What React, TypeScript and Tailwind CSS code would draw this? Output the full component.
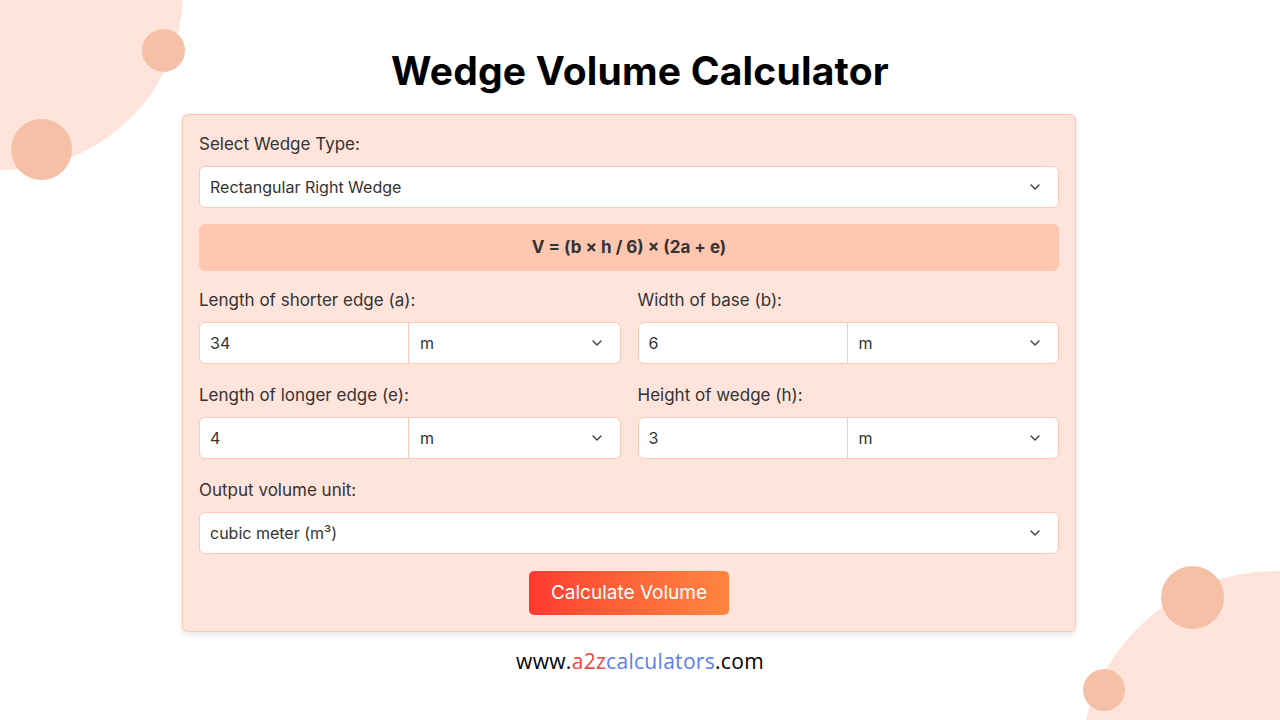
import { ChevronDown } from "lucide-react";

const field = "h-[42px] bg-white border border-[#fcc9b6] text-[16px] text-[#333] flex items-center";

function UnitInput({ label, value }: { label: string; value: string }) {
  return (
    <div className="flex-1">
      <p className="text-[17px] text-[#333] leading-6 mb-[10px]">{label}</p>
      <div className="flex">
        <div className={`${field} w-[210px] rounded-l-[6px] px-[10px]`}>{value}</div>
        <div className={`${field} flex-1 rounded-r-[6px] border-l-0 pl-[11px] pr-[15px] justify-between`}>
          <span>m</span>
          <ChevronDown className="w-4 h-4 text-[#444]" strokeWidth={2.2} />
        </div>
      </div>
    </div>
  );
}

function SelectBox({ value }: { value: string }) {
  return (
    <div className={`${field} rounded-[6px] pl-[10px] pr-[15px] justify-between`}>
      <span>{value}</span>
      <ChevronDown className="w-4 h-4 text-[#444]" strokeWidth={2.2} />
    </div>
  );
}

export default function App() {
  return (
    <div className="relative w-[1280px] h-[720px] overflow-hidden bg-white" style={{ fontFamily: "Inter, 'Noto Sans', sans-serif" }}>
      {/* background decorations */}
      <div className="absolute left-[-173px] top-[-186px] w-[356px] h-[356px] rounded-full bg-[#fee4da]" />
      <div className="absolute left-[142px] top-[29px] w-[43px] h-[43px] rounded-full bg-[#f5c0a5]" />
      <div className="absolute left-[11px] top-[119px] w-[61px] h-[61px] rounded-full bg-[#f5c0a5]" />
      <div className="absolute left-[1080px] top-[571px] w-[392px] h-[392px] rounded-full bg-[#fee4da]" />
      <div className="absolute left-[1161px] top-[566px] w-[63px] h-[63px] rounded-full bg-[#f5c0a5]" />
      <div className="absolute left-[1083px] top-[669px] w-[42px] h-[42px] rounded-full bg-[#f5c0a5]" />

      <div className="relative flex flex-col items-center">
        <h1 className="mt-[45px] text-[39px] leading-[52px] font-bold text-black tracking-[0.2px]">Wedge Volume Calculator</h1>

        <div className="self-start ml-[182px] mt-[17px] w-[894px] bg-[#ffe4db] border border-[#fcc7b4] rounded-[6px] shadow-[0_2px_6px_rgba(0,0,0,0.12)] px-[16px] pt-[17px] pb-[16px]">
          <p className="text-[17px] text-[#333] leading-6 mb-[10px]">Select Wedge Type:</p>
          <SelectBox value="Rectangular Right Wedge" />

          <div className="mt-[16px] h-[47px] rounded-[6px] bg-[#ffc6b0] flex items-center justify-center text-[17px] font-bold text-[#333]">
            V = (b × h / 6) × (2a + e)
          </div>

          <div className="mt-[17px] flex gap-[17px]">
            <UnitInput label="Length of shorter edge (a):" value="34" />
            <UnitInput label="Width of base (b):" value="6" />
          </div>
          <div className="mt-[19px] flex gap-[17px]">
            <UnitInput label="Length of longer edge (e):" value="4" />
            <UnitInput label="Height of wedge (h):" value="3" />
          </div>

          <p className="mt-[19px] text-[17px] text-[#333] leading-6 mb-[10px]">Output volume unit:</p>
          <SelectBox value="cubic meter (m³)" />

          <div className="mt-[17px] flex justify-center">
            <button className="w-[200px] h-[44px] rounded-[5px] bg-gradient-to-r from-[#ff3831] to-[#ff8540] text-white text-[19px]">
              Calculate Volume
            </button>
          </div>
        </div>

        <p className="mt-[14px] text-[21px] text-black tracking-[0.3px]" style={{ fontFamily: "'Open Sans', sans-serif" }}>
          www.<span className="text-[#f2453b]">a2z</span><span className="text-[#5b7cf2]">calculators</span>.com
        </p>
      </div>
    </div>
  );
}
